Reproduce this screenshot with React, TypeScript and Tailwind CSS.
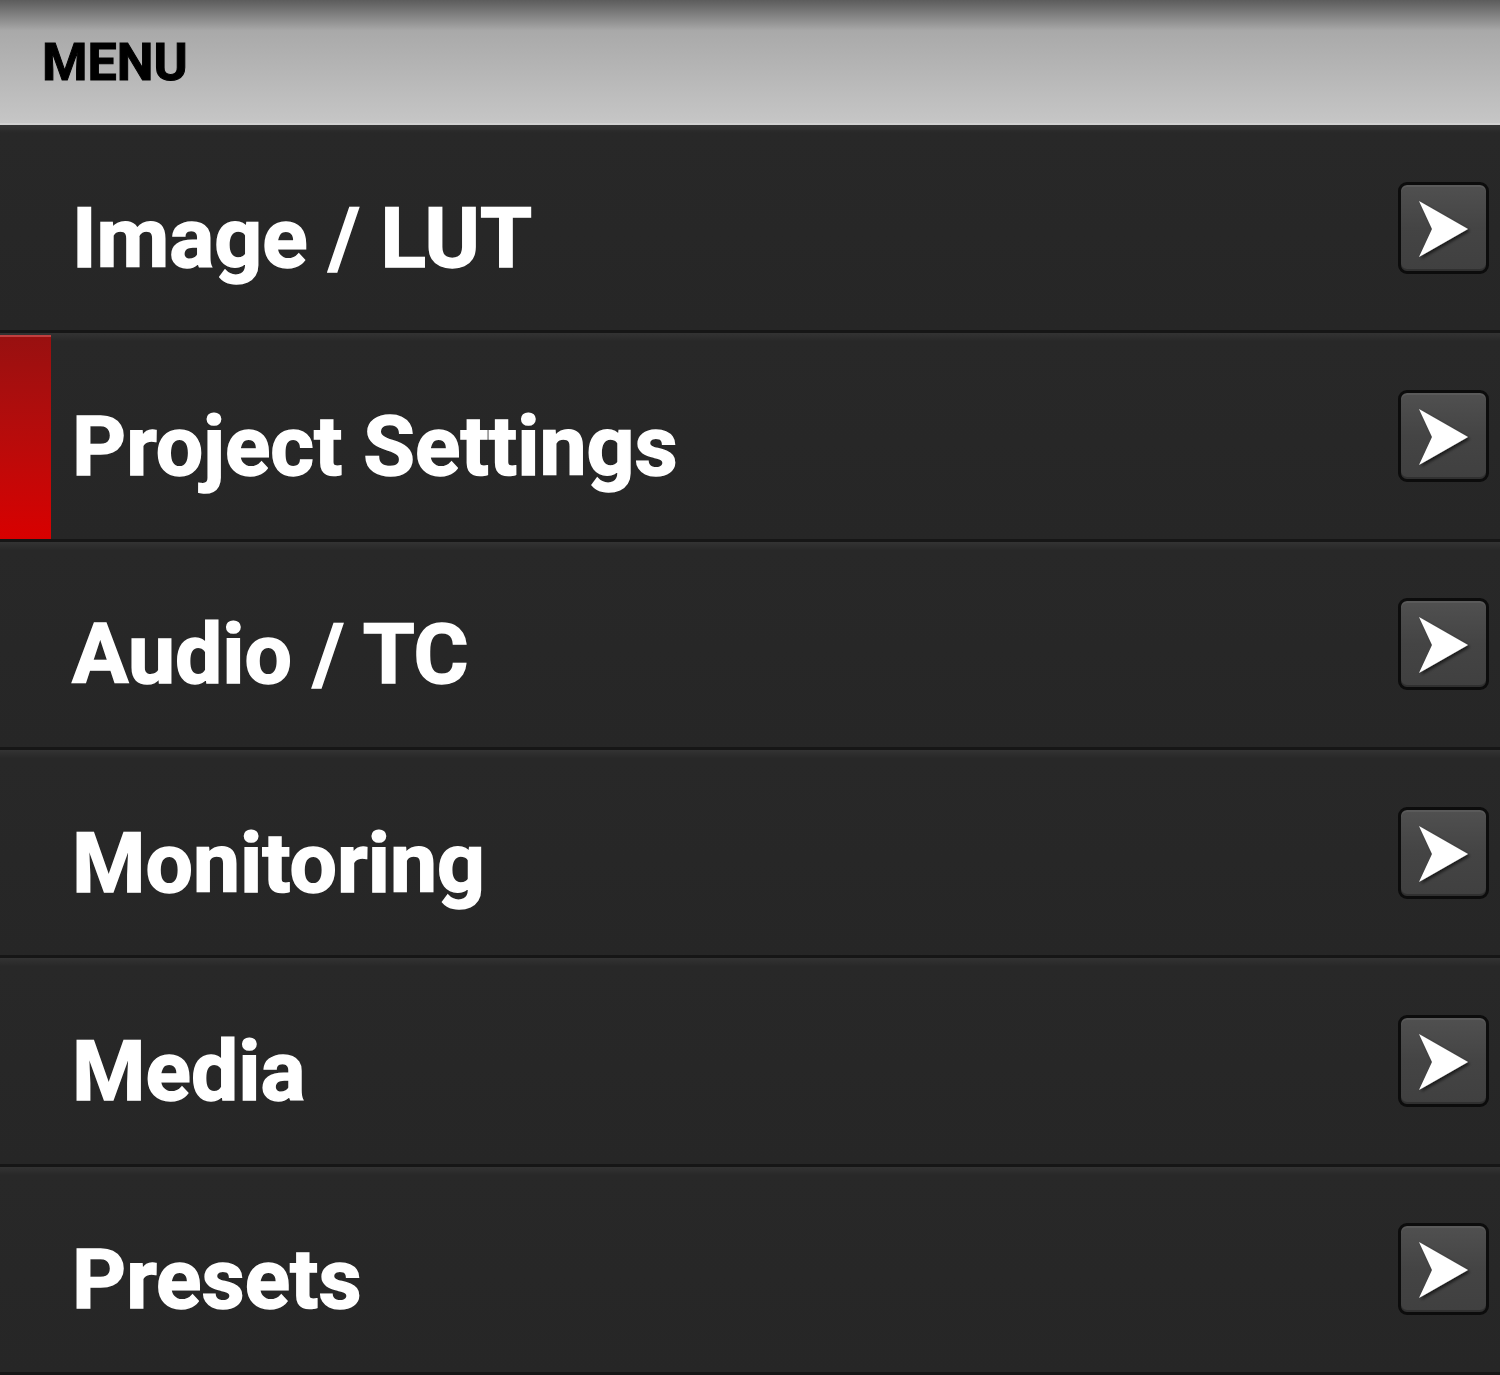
const items = [
  { label: 'Image / LUT', active: false },
  { label: 'Project Settings', active: true },
  { label: 'Audio / TC', active: false },
  { label: 'Monitoring', active: false },
  { label: 'Media', active: false },
  { label: 'Presets', active: false },
];

function ArrowButton() {
  return (
    <div className="mr-[11px] h-[92px] w-[91px] shrink-0 rounded-[9px] border-[3px] border-[#0c0c0c] bg-gradient-to-b from-[#505050] via-[#444444] to-[#404040] shadow-[inset_0_2px_0_#5a5a5a,inset_0_-2px_0_#303030]">
      <svg width="85" height="86" viewBox="0 0 85 86" className="block">
        <defs>
          <filter id="sh" x="-20%" y="-20%" width="150%" height="150%">
            <feDropShadow dx="2" dy="2" stdDeviation="1.5" floodColor="#000" floodOpacity="0.6" />
          </filter>
        </defs>
        <path d="M18 16 L67 44 L18 72 L31 44 Z" fill="#ffffff" filter="url(#sh)" />
      </svg>
    </div>
  );
}

export default function App() {
  return (
    <div className="flex h-[1375px] w-[1500px] flex-col overflow-hidden bg-[#282828] font-['Roboto',_'Liberation_Sans',_sans-serif]">
      <div className="flex h-[125px] shrink-0 items-center border-b-2 border-[#d0d0d0] bg-gradient-to-b from-[#5c5c5c] via-[#a9a9a9] via-[25%] to-[#c6c6c6] pl-[42px]">
        <span className="mt-[2px] text-[52px] font-bold leading-none text-black [-webkit-text-stroke:1px_black]">MENU</span>
      </div>
      {items.map((item) => (
        <div
          key={item.label}
          className="relative flex flex-1 items-center border-b-[3px] border-[#161616] bg-gradient-to-b from-[#333333] from-[0%] via-[#282828] via-[4%] to-[#262626]"
        >
          {item.active && (
            <div className="absolute bottom-0 left-0 top-[2px] w-[51px] bg-gradient-to-b from-[#981010] to-[#d80000] shadow-[inset_0_2px_0_#c04040]" />
          )}
          <span className="mt-[22px] flex-1 pl-[72px] text-[84px] font-bold leading-none text-white [-webkit-text-stroke:1.5px_white]">
            {item.label}
          </span>
          <ArrowButton />
        </div>
      ))}
    </div>
  );
}
